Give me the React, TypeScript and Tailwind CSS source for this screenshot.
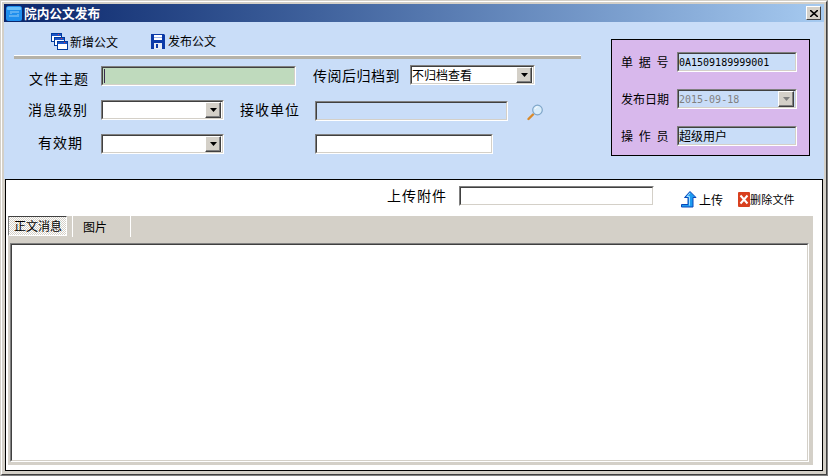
import React from 'react';

const FONT = '[font-family:"Noto_Sans_CJK_SC","Liberation_Sans",sans-serif]';

// Win2k style sunken box
const Sunken: React.FC<{ className?: string; innerClass?: string; children?: React.ReactNode }> = ({ className = '', innerClass = 'bg-white', children }) => (
  <div className={`border border-t-[#808080] border-l-[#808080] border-b-white border-r-white ${className}`}>
    <div className={`h-full w-full flex items-center overflow-hidden border border-t-[#404040] border-l-[#404040] border-b-[#d4d0c8] border-r-[#d4d0c8] ${innerClass}`}>
      {children}
    </div>
  </div>
);

const ComboArrow: React.FC<{ disabled?: boolean }> = ({ disabled }) => (
  <div className="ml-auto mr-px h-4 w-4 shrink-0 flex items-center justify-center bg-[#d4d0c8] border border-t-white border-l-white border-b-[#404040] border-r-[#404040] shadow-[inset_-1px_-1px_0_#808080]">
    <svg width="7" height="4" viewBox="0 0 7 4"><path d="M0 0h7L3.5 4z" fill={disabled ? '#808080' : '#000'} /></svg>
  </div>
);

const Combo: React.FC<{ className?: string; text?: string; disabled?: boolean; innerClass?: string }> = ({ className, text, disabled, innerClass }) => (
  <Sunken className={className} innerClass={innerClass ?? 'bg-white'}>
    {text && <span className={disabled ? 'text-[10px] text-[#808080] [font-family:"DejaVu_Sans_Mono",monospace]' : 'text-xs text-black'}>{text}</span>}
    <ComboArrow disabled={disabled} />
  </Sunken>
);

const WindowsIcon = () => (
  <svg width="17" height="17" viewBox="0 0 17 17" className="shrink-0">
    <rect x="0.5" y="0.5" width="10" height="8" fill="#fff" stroke="#003a9e" />
    <rect x="1" y="1" width="9" height="2" fill="#1b55c8" />
    <rect x="3.5" y="4.5" width="10" height="8" fill="#fff" stroke="#003a9e" />
    <rect x="4" y="5" width="9" height="2" fill="#1b55c8" />
    <rect x="6.5" y="8.5" width="10" height="8" fill="#fff" stroke="#003a9e" />
    <rect x="7" y="9" width="9" height="2" fill="#1b55c8" />
    <rect x="13" y="9" width="1" height="1" fill="#e33" />
    <rect x="10" y="5" width="1" height="1" fill="#e33" />
    <rect x="7" y="1" width="1" height="1" fill="#e33" />
  </svg>
);

const SaveIcon = () => (
  <svg width="14" height="15" viewBox="0 0 14 15" className="shrink-0">
    <path d="M0 0h13l1 1v14H0z" fill="#0c3aa8" />
    <rect x="3" y="1" width="8" height="5" fill="#fff" />
    <rect x="3" y="3" width="8" height="1" fill="#9db4e8" />
    <rect x="3" y="9" width="8" height="6" fill="#e8ecf5" />
    <rect x="5" y="10" width="2" height="4" fill="#0c3aa8" />
  </svg>
);

const TitleIcon = () => (
  <svg width="16" height="15" viewBox="0 0 16 15" className="shrink-0">
    <rect width="16" height="15" rx="2.5" fill="#1f8fee" />
    <rect x="1" y="1" width="14" height="3" rx="1" fill="#6cc0f8" />
    <path d="M4 5h9v2H6v1h7v3H3v-2h8V8H4z" fill="#5aaef2" />
  </svg>
);

const Magnifier = () => (
  <svg width="17" height="17" viewBox="0 0 17 17">
    <path d="M6 10.5 1.5 15" stroke="#d98a2b" strokeWidth="2.4" strokeLinecap="round" />
    <circle cx="10.5" cy="6" r="4.8" fill="#d8ecfa" stroke="#7fa6c9" strokeWidth="1.2" />
    <path d="M8 5c.4-1.3 1.3-2 2.6-2.2" stroke="#fff" fill="none" />
  </svg>
);

const UploadIcon = () => (
  <svg width="16" height="17" viewBox="0 0 16 17" className="shrink-0">
    <path d="M9 0.5 15 6.5h-3V16H0.5v-2.5H7V6.5H3.5z" fill="#1e9bf0" stroke="#0a47b8" strokeLinejoin="round" />
    <path d="M9 2 6 5.5h2.5v9" stroke="#9fdcff" fill="none" />
  </svg>
);

const DeleteIcon = () => (
  <svg width="12" height="15" viewBox="0 0 12 15" className="shrink-0">
    <rect width="12" height="15" rx="1" fill="#d8401f" />
    <path d="M2.5 3.5 9.5 11.5M9.5 3.5 2.5 11.5" stroke="#fff" strokeWidth="2" />
  </svg>
);

const Field: React.FC<{ label: string; children: React.ReactNode; className?: string }> = ({ label, children, className = '' }) => (
  <div className={`flex items-center ${className}`}>
    <span className="w-[65px] pl-[9px] text-xs text-black whitespace-pre [word-spacing:3px]">{label}</span>
    {children}
  </div>
);

export default function App() {
  return (
    <div className={`w-[828px] h-[476px] overflow-hidden bg-[#d4d0c8] border border-t-[#d4d0c8] border-l-[#d4d0c8] border-b-[#808080] border-r-[#808080] ${FONT}`}>
      <div className="h-full border border-t-white border-l-white border-b-[#404040] border-r-[#404040] pl-[2px] pt-[2px] pr-[2px]">
        {/* title bar */}
        <div className="h-[18px] flex items-center pl-[2px] pr-[3px] bg-linear-to-r from-[#0a246a] to-[#a6caf0]">
          <TitleIcon />
          <span className="ml-[2px] text-[12.7px] font-bold text-white leading-none">院内公文发布</span>
          <div className="ml-auto h-[14px] w-[15px] flex items-center justify-center bg-[#d4d0c8] border border-t-white border-l-white border-b-[#404040] border-r-[#404040]">
            <svg width="8" height="7" viewBox="0 0 8 7"><path d="M0 0l8 7M8 0L0 7" stroke="#000" strokeWidth="1.6" /></svg>
          </div>
        </div>

        {/* form area */}
        <div className="h-[157px] flex bg-[#c9ddf8]">
          <div className="w-[607px] shrink-0">
            <div className="h-[33px] pt-[11px] box-content flex items-start">
              <div className="ml-[47px] flex items-center gap-[2px] text-xs text-black leading-[16px]">
                <WindowsIcon />
                <span>新增公文</span>
              </div>
              <div className="ml-[33px] flex items-center gap-[3px] text-xs text-black leading-[16px]">
                <SaveIcon />
                <span>发布公文</span>
              </div>
            </div>

            <div className="-mt-[11px] ml-[10px] w-[567px] h-[4px] bg-[#b5b2a9] border-t border-t-white" />

            <div className="mt-[7px] flex items-start">
              <span className="mt-[3px] ml-[25px] w-[72px] text-sm tracking-[1px] text-black leading-[18px]">文件主题</span>
              <Sunken className="h-5 w-[195px]" innerClass="bg-[#bfdabd]">
                <span className="ml-px h-[14px] w-px bg-[#3a2a50]" />
              </Sunken>
              <span className="ml-[17px] w-[97px] text-sm tracking-[0.5px] text-black leading-[18px]">传阅后归档到</span>
              <Combo className="-mt-px h-5 w-[125px]" text="不归档查看" />
            </div>

            <div className="mt-[13px] flex items-start">
              <span className="ml-[24px] w-[73px] text-sm tracking-[1px] text-black leading-[18px]">消息级别</span>
              <Combo className="h-5 w-[123px]" />
              <span className="ml-[16px] w-[75px] text-sm tracking-[1px] text-black leading-[18px]">接收单位</span>
              <Sunken className="mt-px h-5 w-[193px]" innerClass="bg-[#c9ddf8]" />
              <span className="mt-[4px] ml-[19px]"><Magnifier /></span>
            </div>

            <div className="mt-[13px] flex items-start">
              <span className="-mt-px ml-[34px] w-[63px] text-sm tracking-[1px] text-black leading-[18px]">有效期</span>
              <Combo className="h-5 w-[123px]" />
              <Sunken className="ml-[91px] h-5 w-[178px]" />
            </div>
          </div>

          {/* purple info box */}
          <div className="mt-[17px] h-[117px] w-[199px] border border-black bg-[#d8b8ec] pt-3">
            <Field label="单 据 号">
              <Sunken className="h-5 w-[120px]" innerClass="bg-[#c9ddf8]">
                <span className="text-[10px] text-black [font-family:'DejaVu_Sans_Mono',monospace]">0A1509189999001</span>
              </Sunken>
            </Field>
            <Field label="发布日期" className="mt-[17px]">
              <Combo className="h-5 w-[120px]" text="2015-09-18" disabled innerClass="bg-[#c9ddf8]" />
            </Field>
            <Field label="操 作 员" className="mt-[17px]">
              <Sunken className="h-5 w-[120px]" innerClass="bg-[#c9ddf8]">
                <span className="text-xs text-black">超级用户</span>
              </Sunken>
            </Field>
          </div>
        </div>

        {/* attachment and editor */}
        <div className="ml-px mr-px h-[292px] border border-black bg-white">
          <div className="h-[36px] flex items-start">
            <span className="mt-[6px] ml-[381px] text-sm tracking-[1px] text-black leading-[18px]">上传附件</span>
            <Sunken className="mt-[6px] ml-[12px] h-[20px] w-[195px]" />
            <div className="mt-[11px] ml-[27px] flex items-center gap-[2px] text-xs text-black leading-[16px]">
              <UploadIcon />
              <span>上传</span>
            </div>
            <div className="mt-[11px] ml-[15px] flex items-center text-[11px] text-black leading-[16px]">
              <DeleteIcon />
              <span className="tracking-[0.2px]">删除文件</span>
            </div>
          </div>

          <div className="ml-[2px] w-[805px] h-[249px] bg-[#d4d0c8]">
            <div className="h-[21px] flex items-start">
              <div className="h-[20px] w-[59px] pl-px flex items-center justify-center text-xs text-black border border-t-[#404040] border-l-[#808080] border-b-white border-r-white bg-[repeating-conic-gradient(#fff_0_25%,#d4d0c8_0_50%)] bg-[length:2px_2px]">正文消息</div>
              <div className="ml-[5px] h-[21px] w-[59px] pl-[10px] flex items-center border-l border-l-white border-r border-r-white text-xs text-black">图片</div>
            </div>
            <div className="pt-[6px] pl-[2px] pr-[4px] h-[225px]">
              <Sunken className="h-[219px] w-full" />
            </div>
          </div>
        </div>
      </div>
    </div>
  );
}
